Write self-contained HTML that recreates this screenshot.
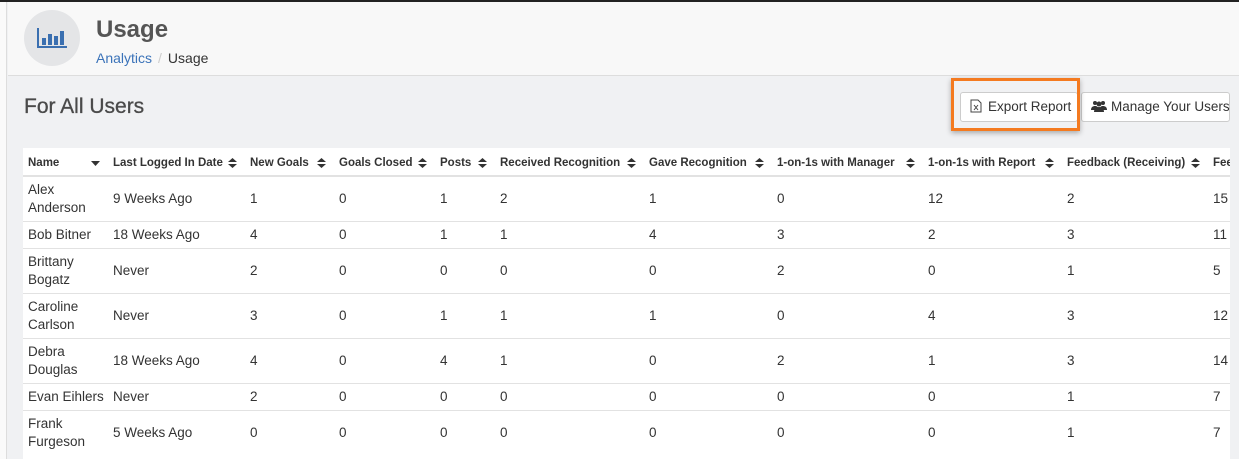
<!DOCTYPE html>
<html><head><style>
*{margin:0;padding:0;box-sizing:border-box}
body{width:1239px;height:459px;overflow:hidden;background:#f0f1f3;font-family:"Liberation Sans",sans-serif;color:#333;position:relative}
.top{position:absolute;left:0;top:0;width:1239px;height:2px;background:#222}
.lb{position:absolute;left:0;top:2px;width:7px;height:457px;background:#fafafa;border-right:1px solid #ddd}
.hdr{position:absolute;left:8px;top:2px;right:0;height:74px;background:#f8f8f8;border-bottom:1px solid #ddd}
.circ{position:absolute;left:24px;top:10px;width:56px;height:56px;border-radius:50%;background:#e4e5e7}
h1{position:absolute;left:96px;top:16px;font-size:24px;font-weight:bold;color:#555}
.bc{position:absolute;left:96px;top:50px;font-size:14px;color:#333}
.bc a{color:#3b73b9;text-decoration:none}
.bc span{color:#ccc;margin:0 6px}
h2{position:absolute;left:24px;top:95px;font-size:21px;font-weight:normal;color:#4a4a4a;-webkit-text-stroke:0.3px #4a4a4a}
.btn{position:absolute;top:92px;height:30px;background:#fff;border:1px solid #ccc;border-radius:3px;font-size:13.5px;line-height:28px;padding-left:9px;color:#333;white-space:nowrap}
.hl{position:absolute;left:951px;top:78px;width:129px;height:53px;border:3px solid #f47a20;box-shadow:0 2px 5px rgba(0,0,0,.3)}
.tbl{position:absolute;left:23px;top:148px;width:1207px;height:311px;background:#fff;overflow:hidden}
table{border-collapse:collapse;table-layout:fixed;width:1240px}
th{font-size:11.5px;font-weight:bold;text-align:left;height:28px;padding-left:5px;padding-top:2px;border-bottom:2px solid #e2e2e2;white-space:nowrap;position:relative;color:#333;overflow:hidden}
th svg{position:absolute;right:8px;top:10px}
td{font-size:13.5px;padding-left:5px;border-top:1px solid #e2e2e2;line-height:18px;vertical-align:middle}
tr.t td{height:45px}tr.s td{height:27px}
</style></head><body>
<div class="top"></div><div class="lb"></div>
<div class="hdr"></div>
<div class="circ"><svg width="56" height="56" viewBox="0 0 56 56"><g fill="#3a6fb0"><rect x="13" y="18" width="2" height="20"/><rect x="13" y="36" width="30" height="2"/><rect x="18" y="28" width="4" height="7"/><rect x="24" y="24" width="4" height="11"/><rect x="30" y="26" width="4" height="9"/><rect x="36" y="21" width="4" height="14"/></g></svg></div>
<h1>Usage</h1>
<div class="bc"><a>Analytics</a><span>/</span>Usage</div>
<h2>For All Users</h2>
<div class="btn" style="left:960px;width:118px"><svg width="12" height="14" viewBox="0 0 12 14" style="vertical-align:-2px;margin-right:6px"><path d="M1 1h7l3 3v9H1z" fill="none" stroke="#444"/><path d="M4 6l4 5M8 6l-4 5" stroke="#444"/></svg>Export Report</div>
<div class="btn" style="left:1081px;width:149px"><svg width="16" height="12" viewBox="0 0 16 12" style="vertical-align:-1px;margin-right:4px"><g fill="#333"><circle cx="4" cy="3" r="2"/><circle cx="12" cy="3" r="2"/><circle cx="8" cy="4" r="2.5"/><path d="M0 10c0-3 2-4 4-4s3 1 3 2v2z"/><path d="M16 10c0-3-2-4-4-4s-3 1-3 2v2z"/><path d="M3 12c0-3 2-5 5-5s5 2 5 5z"/></g></svg>Manage Your Users</div>
<div class="hl"></div>
<div class="tbl"><table>
<colgroup><col style="width:85px"><col style="width:137px"><col style="width:89px"><col style="width:101px"><col style="width:60px"><col style="width:149px"><col style="width:128px"><col style="width:151px"><col style="width:139px"><col style="width:146px"><col style="width:55px"></colgroup>
<tr><th>Name<svg width="9" height="9" viewBox="0 0 9 9"><path d="M0 3h9L4.5 8z" fill="#333"/></svg></th>
<th>Last Logged In Date<svg width="9" height="10" viewBox="0 0 9 10"><path d="M0 4h9L4.5 0zM0 6h9L4.5 10z" fill="#333"/></svg></th>
<th>New Goals<svg width="9" height="10" viewBox="0 0 9 10"><path d="M0 4h9L4.5 0zM0 6h9L4.5 10z" fill="#333"/></svg></th>
<th>Goals Closed<svg width="9" height="10" viewBox="0 0 9 10"><path d="M0 4h9L4.5 0zM0 6h9L4.5 10z" fill="#333"/></svg></th>
<th>Posts<svg width="9" height="10" viewBox="0 0 9 10"><path d="M0 4h9L4.5 0zM0 6h9L4.5 10z" fill="#333"/></svg></th>
<th>Received Recognition<svg width="9" height="10" viewBox="0 0 9 10"><path d="M0 4h9L4.5 0zM0 6h9L4.5 10z" fill="#333"/></svg></th>
<th>Gave Recognition<svg width="9" height="10" viewBox="0 0 9 10"><path d="M0 4h9L4.5 0zM0 6h9L4.5 10z" fill="#333"/></svg></th>
<th>1-on-1s with Manager<svg width="9" height="10" viewBox="0 0 9 10"><path d="M0 4h9L4.5 0zM0 6h9L4.5 10z" fill="#333"/></svg></th>
<th>1-on-1s with Report<svg width="9" height="10" viewBox="0 0 9 10"><path d="M0 4h9L4.5 0zM0 6h9L4.5 10z" fill="#333"/></svg></th>
<th>Feedback (Receiving)<svg width="9" height="10" viewBox="0 0 9 10"><path d="M0 4h9L4.5 0zM0 6h9L4.5 10z" fill="#333"/></svg></th>
<th>Feedback</th></tr>
<tr class="t"><td>Alex Anderson</td><td>9 Weeks Ago</td><td>1</td><td>0</td><td>1</td><td>2</td><td>1</td><td>0</td><td>12</td><td>2</td><td>15</td></tr>
<tr class="s"><td style="white-space:nowrap">Bob Bitner</td><td>18 Weeks Ago</td><td>4</td><td>0</td><td>1</td><td>1</td><td>4</td><td>3</td><td>2</td><td>3</td><td>11</td></tr>
<tr class="t"><td>Brittany Bogatz</td><td>Never</td><td>2</td><td>0</td><td>0</td><td>0</td><td>0</td><td>2</td><td>0</td><td>1</td><td>5</td></tr>
<tr class="t"><td>Caroline Carlson</td><td>Never</td><td>3</td><td>0</td><td>1</td><td>1</td><td>1</td><td>0</td><td>4</td><td>3</td><td>12</td></tr>
<tr class="t"><td>Debra Douglas</td><td>18 Weeks Ago</td><td>4</td><td>0</td><td>4</td><td>1</td><td>0</td><td>2</td><td>1</td><td>3</td><td>14</td></tr>
<tr class="s"><td style="white-space:nowrap">Evan Eihlers</td><td>Never</td><td>2</td><td>0</td><td>0</td><td>0</td><td>0</td><td>0</td><td>0</td><td>1</td><td>7</td></tr>
<tr class="t"><td>Frank Furgeson</td><td>5 Weeks Ago</td><td>0</td><td>0</td><td>0</td><td>0</td><td>0</td><td>0</td><td>0</td><td>1</td><td>7</td></tr>
</table></div>
</body></html>
